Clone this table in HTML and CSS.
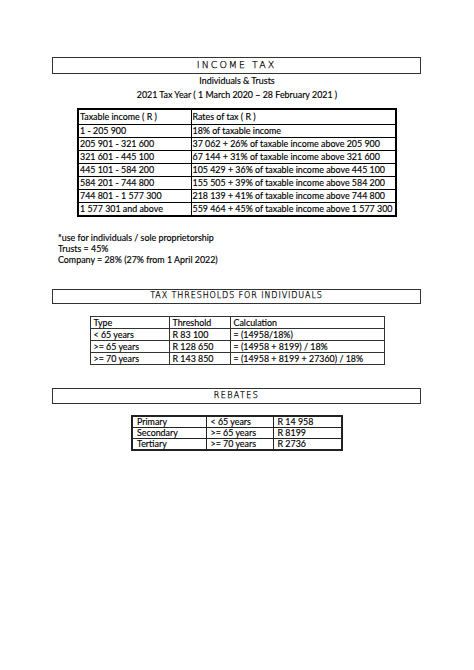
FILE: index.html
```html
<!DOCTYPE html>
<html>
<head>
<meta charset="utf-8">
<link rel="stylesheet" href="styles.css">
</head>
<body>
<div class="page">
  <div class="banner banner-first">INCOME TAX</div>
  <div class="subs">
    <div class="sub1">Individuals &amp; Trusts</div>
    <div class="sub2">2021 Tax Year ( 1 March 2020 – 28 February 2021 )</div>
  </div>
  <table class="rates">
    <colgroup><col class="rc1"><col class="rc2"></colgroup>
    <tr class="head"><td>Taxable income ( R )</td><td>Rates of tax ( R )</td></tr>
    <tr><td>1 - 205 900</td><td>18% of taxable income</td></tr>
    <tr><td>205 901 - 321 600</td><td>37 062 + 26% of taxable income above 205 900</td></tr>
    <tr><td>321 601 - 445 100</td><td>67 144 + 31% of taxable income above 321 600</td></tr>
    <tr><td>445 101 - 584 200</td><td>105 429 + 36% of taxable income above 445 100</td></tr>
    <tr><td>584 201 - 744 800</td><td>155 505 + 39% of taxable income above 584 200</td></tr>
    <tr><td>744 801 - 1 577 300</td><td>218 139 + 41% of taxable income above 744 800</td></tr>
    <tr><td>1 577 301 and above</td><td>559 464 + 45% of taxable income above 1 577 300</td></tr>
  </table>
  <div class="notes">
    <div>*use for individuals / sole proprietorship</div>
    <div>Trusts = 45%</div>
    <div>Company = 28% (27% from 1 April 2022)</div>
  </div>
  <div class="banner banner-second">TAX THRESHOLDS FOR INDIVIDUALS</div>
  <table class="thresholds">
    <colgroup><col class="tc1"><col class="tc2"><col class="tc3"></colgroup>
    <tr><td>Type</td><td>Threshold</td><td>Calculation</td></tr>
    <tr><td>&lt; 65 years</td><td>R 83 100</td><td>= (14958/18%)</td></tr>
    <tr><td>&gt;= 65 years</td><td>R 128 650</td><td>= (14958 + 8199) / 18%</td></tr>
    <tr><td>&gt;= 70 years</td><td>R 143 850</td><td>= (14958 + 8199 + 27360) / 18%</td></tr>
  </table>
  <div class="banner banner-third">REBATES</div>
  <table class="rebates">
    <colgroup><col class="bc1"><col class="bc2"><col class="bc3"></colgroup>
    <tr><td>Primary</td><td>&lt; 65 years</td><td>R 14 958</td></tr>
    <tr><td>Secondary</td><td>&gt;= 65 years</td><td>R 8199</td></tr>
    <tr><td>Tertiary</td><td>&gt;= 70 years</td><td>R 2736</td></tr>
  </table>
</div>
</body>
</html>
```
FILE: styles.css
```css
html, body {
  margin: 0;
  padding: 0;
  background: #fff;
}
.page {
  width: 474px;
  height: 670px;
  padding-top: 57px;
  box-sizing: border-box;
  font-family: "Lato", "Liberation Sans", sans-serif;
  font-size: 8.9px;
  color: #000;
  -webkit-text-stroke: 0.15px #000;
}
.banner {
  box-sizing: border-box;
  width: 369px;
  margin-left: 52px;
  border: 1.5px solid #333;
  text-align: center;
  font-family: "DejaVu Sans", sans-serif;
  font-weight: 200;
  color: #000;
  -webkit-text-stroke: 0.25px #000;
  letter-spacing: 0.9px;
}
.banner-first {
  height: 17px;
  line-height: 14px;
  font-size: 9.5px;
  letter-spacing: 2px;
}
.banner-second {
  height: 15px;
  line-height: 12px;
  font-size: 8px;
  margin-top: 24px;
}
.banner-third {
  height: 16px;
  line-height: 13px;
  font-size: 8px;
  margin-top: 23px;
  letter-spacing: 1.4px;
}
.subs {
  text-align: center;
}
.sub1 {
  line-height: 13px;
}
.sub2 {
  line-height: 15px;
}
table {
  border-collapse: collapse;
  table-layout: fixed;
  margin-left: auto;
  margin-right: auto;
}
td {
  padding: 0 0 0 1px;
  white-space: nowrap;
  overflow: hidden;
  line-height: 10px;
}
.rates {
  margin-top: 6px;
  width: 318px;
  border: 2px solid #000;
}
.rates td {
  border: 1px solid #000;
  height: 12px;
}
.rates .head td {
  height: 14px;
}
.rc1 { width: 113px; }
.rc2 { width: 205px; }
.notes {
  margin-top: 16px;
  margin-left: 58px;
  line-height: 10.8px;
}
.thresholds {
  margin-top: 12px;
  width: 294px;
  border: 1px solid #333;
}
.thresholds td {
  border: 1px solid #333;
  height: 11px;
  padding-left: 3px;
}
.tc1 { width: 79px; }
.tc2 { width: 61px; }
.tc3 { width: 154px; }
.rebates {
  margin-top: 11px;
  width: 210px;
  border: 2px solid #222;
}
.rebates td {
  border: 1.5px solid #222;
  height: 10px;
  padding-left: 4px;
}
.bc1 { width: 74px; }
.bc2 { width: 67px; }
.bc3 { width: 69px; }
```
